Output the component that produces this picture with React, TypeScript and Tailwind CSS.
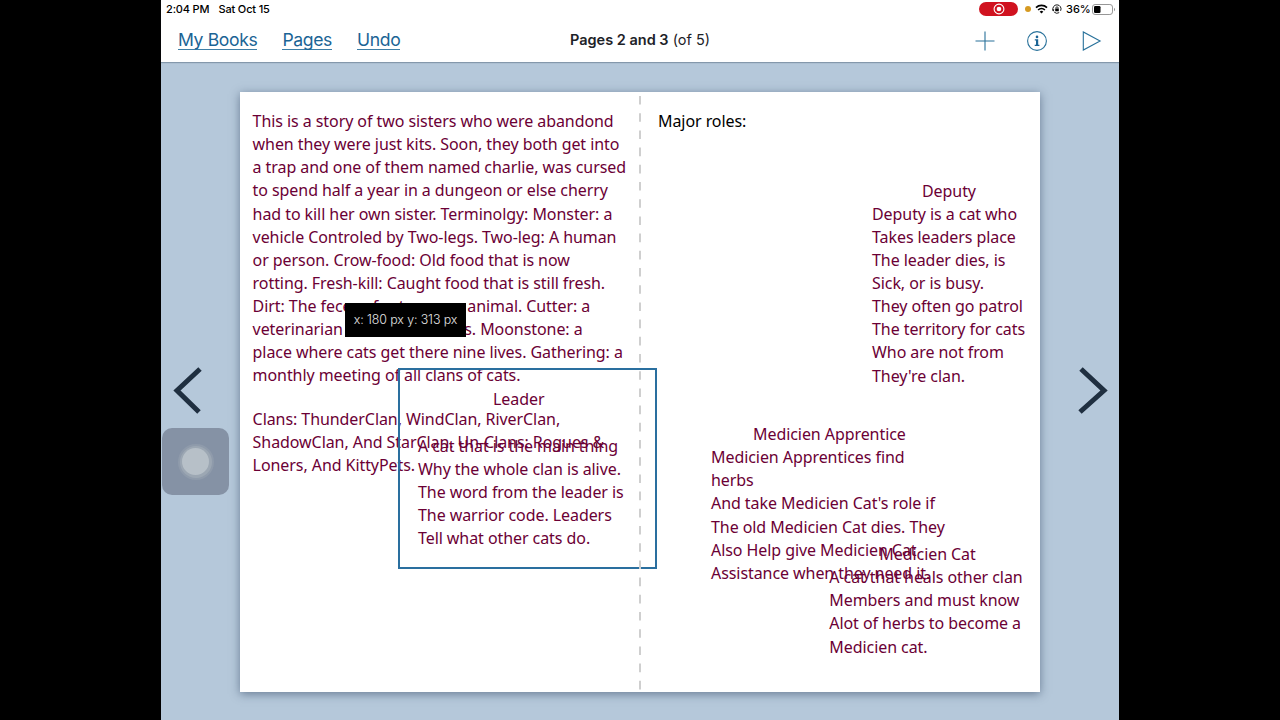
import clsx from 'clsx'

interface TextBoxProps {
  lines: string[]
  title?: string
  className?: string
  titleClassName?: string
}

const STORY_LINES = [
  'This is a story of two sisters who were abandond',
  'when they were just kits. Soon, they both get into',
  'a trap and one of them named charlie, was cursed',
  'to spend half a year in a dungeon or else cherry',
  'had to kill her own sister. Terminolgy: Monster: a',
  'vehicle Controled by Two-legs. Two-leg: A human',
  'or person. Crow-food: Old food that is now',
  'rotting. Fresh-kill: Caught food that is still fresh.',
  'Dirt: The feces of cats or any animal. Cutter: a',
  'veterinarian that rescues cats. Moonstone: a',
  'place where cats get there nine lives. Gathering: a',
  'monthly meeting of all clans of cats.',
]

const CLAN_LINES = [
  'Clans: ThunderClan, WindClan, RiverClan,',
  'ShadowClan, And StarClan. Un-Clans: Rogues &',
  'Loners, And KittyPets.',
]

const LEADER_LINES = [
  'A cat that is the main thing',
  'Why the whole clan is alive.',
  'The word from the leader is',
  'The warrior code. Leaders',
  'Tell what other cats do.',
]

const DEPUTY_LINES = [
  'Deputy is a cat who',
  'Takes leaders place',
  'The leader dies, is',
  'Sick, or is busy.',
  'They often go patrol',
  'The territory for cats',
  'Who are not from',
  "They're clan.",
]

const APPRENTICE_LINES = [
  'Medicien Apprentices find',
  'herbs',
  "And take Medicien Cat's role if",
  'The old Medicien Cat dies. They',
  'Also Help give Medicien Cat',
  'Assistance when they need it.',
]

const MEDICIEN_CAT_LINES = [
  'A cat that heals other clan',
  'Members and must know',
  'Alot of herbs to become a',
  'Medicien cat.',
]

function TextBox({ lines, title, className, titleClassName }: TextBoxProps) {
  return (
    <div className={clsx('absolute whitespace-nowrap', className)}>
      {title && <h2 className={titleClassName}>{title}</h2>}
      {lines.map((line) => (
        <p key={line}>{line}</p>
      ))}
    </div>
  )
}

function StatusBar() {
  return (
    <div className="flex h-[18px] items-center justify-between pr-[3px] pl-[5px] text-[11px] font-medium text-black">
      <div className="flex gap-[9px] tracking-[-0.15px]">
        <span>2:04 PM</span>
        <span>Sat Oct 15</span>
      </div>
      <div className="flex items-center">
        <span className="flex h-[14px] w-[39px] items-center justify-center rounded-full bg-[#d0121f]">
          <svg width="12" height="12" viewBox="0 0 12 12" fill="none">
            <circle cx="6" cy="6" r="4.9" stroke="white" strokeWidth="1.1" />
            <circle cx="6" cy="6" r="2.3" fill="white" />
          </svg>
        </span>
        <span className="ml-[7px] size-[6px] rounded-full bg-[#d69a22]" />
        <svg className="ml-1" width="13" height="10" viewBox="0 0 13 10" fill="none">
          <path d="M1 3.7a7.9 7.9 0 0 1 11 0" stroke="black" strokeWidth="1.7" />
          <path d="M3.1 6a4.9 4.9 0 0 1 6.8 0" stroke="black" strokeWidth="1.6" />
          <path d="M6.5 9.6 4.7 7.7a2.6 2.6 0 0 1 3.6 0z" fill="black" />
        </svg>
        <svg className="ml-[4px]" width="10" height="10" viewBox="0 0 10 10" fill="none">
          <path d="M1.2 6.6a4.1 4.1 0 1 1 7.4.2M2.2 8.1a4.1 4.1 0 0 0 5 .5" stroke="black" strokeWidth="0.9" />
          <path d="M0 5.6h2.4L1.2 7.5z" fill="black" />
          <rect x="3.2" y="4.6" width="3.6" height="2.7" rx="0.4" fill="black" />
          <path d="M3.9 4.7v-.8a1.1 1.1 0 0 1 2.2 0v.8" stroke="black" strokeWidth="0.8" />
        </svg>
        <span className="ml-[4px] w-[25px]">36%</span>
        <svg className="ml-px" width="24" height="11" viewBox="0 0 24 11" fill="none">
          <rect x="0.5" y="0.5" width="20" height="10" rx="2.6" stroke="#969696" />
          <rect x="2" y="2" width="6.5" height="7" rx="1.2" fill="black" />
          <path d="M22 3.7c1.4.6 1.4 3 0 3.6z" fill="#969696" />
        </svg>
      </div>
    </div>
  )
}

function Toolbar() {
  return (
    <div className="grid h-[44px] grid-cols-[1fr_auto_1fr] items-center text-[#1b6495]">
      <nav className="flex gap-[25px] pb-px pl-[17px] text-[17.6px] tracking-[-0.37px]">
        <a className="border-b border-[#3d7ea6] leading-[19px]">My Books</a>
        <a className="border-b border-[#3d7ea6] leading-[19px]">Pages</a>
        <a className="border-b border-[#3d7ea6] leading-[19px]">Undo</a>
      </nav>
      <h1 className="text-[14.5px] text-[#1d2228]">
        <span className="font-semibold">Pages 2 and 3</span> (of 5)
      </h1>
      <div className="flex items-center justify-end pt-[2px] pr-[17px]">
        <svg width="20" height="20" viewBox="0 0 20 20" fill="none" stroke="#28719a" strokeWidth="1.1">
          <path d="M10 0.5v19M0.5 10h19" />
        </svg>
        <svg className="mr-[35px] ml-[32px]" width="20" height="20" viewBox="0 0 20 20" fill="none">
          <circle cx="10" cy="10" r="9.4" stroke="#28719a" strokeWidth="1.1" />
          <circle cx="10" cy="5.9" r="1.3" fill="#1b6495" />
          <path d="M7.8 8.2h3.4v5.6h1.2v1.2H7.7v-1.2h1.3V9.4H7.8z" fill="#1b6495" />
        </svg>
        <svg width="20" height="20" viewBox="0 0 20 20" fill="none" stroke="#28719a" strokeWidth="1.1">
          <path d="M1.3 0.9v18.2L18.1 10z" />
        </svg>
      </div>
    </div>
  )
}

function BookSpread() {
  return (
    <div className="relative h-[600px] w-[800px] bg-white font-['Noto_Sans','Open_Sans',sans-serif] text-[16px] leading-[23.12px] tracking-[-0.07px] text-[#6b0035] shadow-[0_2px_9px_rgba(30,50,80,0.5)]">
      <TextBox className="top-[18px] left-[12.6px]" lines={STORY_LINES} />
      <TextBox className="top-[316px] left-[12.6px]" lines={CLAN_LINES} />
      <p className="absolute top-[18px] left-[418px] text-black">Major roles:</p>
      <TextBox className="top-[87.6px] left-[632px]" title="Deputy" titleClassName="pl-[50px]" lines={DEPUTY_LINES} />
      <TextBox
        className="top-[331px] left-[471px]"
        title="Medicien Apprentice"
        titleClassName="pl-[42px]"
        lines={APPRENTICE_LINES}
      />
      <TextBox
        className="top-[451px] left-[589.3px]"
        title="Medicien Cat"
        titleClassName="pl-[50px]"
        lines={MEDICIEN_CAT_LINES}
      />

      {/* selected box */}
      <div className="absolute top-[276px] left-[158px] h-[201px] w-[259px] border-2 border-[#2a6f9f]" />
      <TextBox
        className="top-[296.3px] left-[178px]"
        title="Leader"
        titleClassName="mb-[23.12px] pl-[75px]"
        lines={LEADER_LINES}
      />

      {/* fold between the two pages */}
      <svg className="absolute top-0 left-[399px]" width="2" height="600">
        <path d="M1 4v596" stroke="#cfcfcf" strokeWidth="2" strokeDasharray="8.6 8.6" />
      </svg>

      <div className="absolute top-[211px] left-[105px] flex h-[34px] w-[121px] items-center justify-center bg-black font-['Inter',sans-serif] text-[12.4px] font-light tracking-[-0.1px] text-[#e4e4e4]">
        x: 180 px y: 313 px
      </div>
    </div>
  )
}

export default function App() {
  return (
    <div className="flex h-[720px] w-[1280px] justify-center overflow-hidden bg-black font-['Inter',sans-serif]">
      <div className="flex w-[958px] flex-col bg-[#b5c8da]">
        <header className="bg-white shadow-[0_1px_1px_rgba(60,80,100,0.4)]">
          <StatusBar />
          <Toolbar />
        </header>
        <main className="relative flex flex-1 justify-center pt-[30px]">
          <BookSpread />
          <svg className="absolute top-[305px] left-[12px]" width="30" height="48" fill="none">
            <path d="M27 2 4 23.5 26 45" stroke="#1f2f40" strokeWidth="5" />
          </svg>
          <svg className="absolute top-[305px] right-[11px]" width="30" height="48" fill="none">
            <path d="M3 2 26 23.5 2 45" stroke="#1f2f40" strokeWidth="5" />
          </svg>
          {/* floating touch button */}
          <div className="absolute top-[366px] left-px flex size-[67px] items-center justify-center rounded-[10px] bg-[#8592a5]">
            <div className="flex size-[36px] items-center justify-center rounded-full bg-[#8f9bab]">
              <div className="flex size-[32px] items-center justify-center rounded-full bg-[#9ca7b3]">
                <div className="size-[27px] rounded-full bg-[#b7c0c8]" />
              </div>
            </div>
          </div>
        </main>
      </div>
    </div>
  )
}
